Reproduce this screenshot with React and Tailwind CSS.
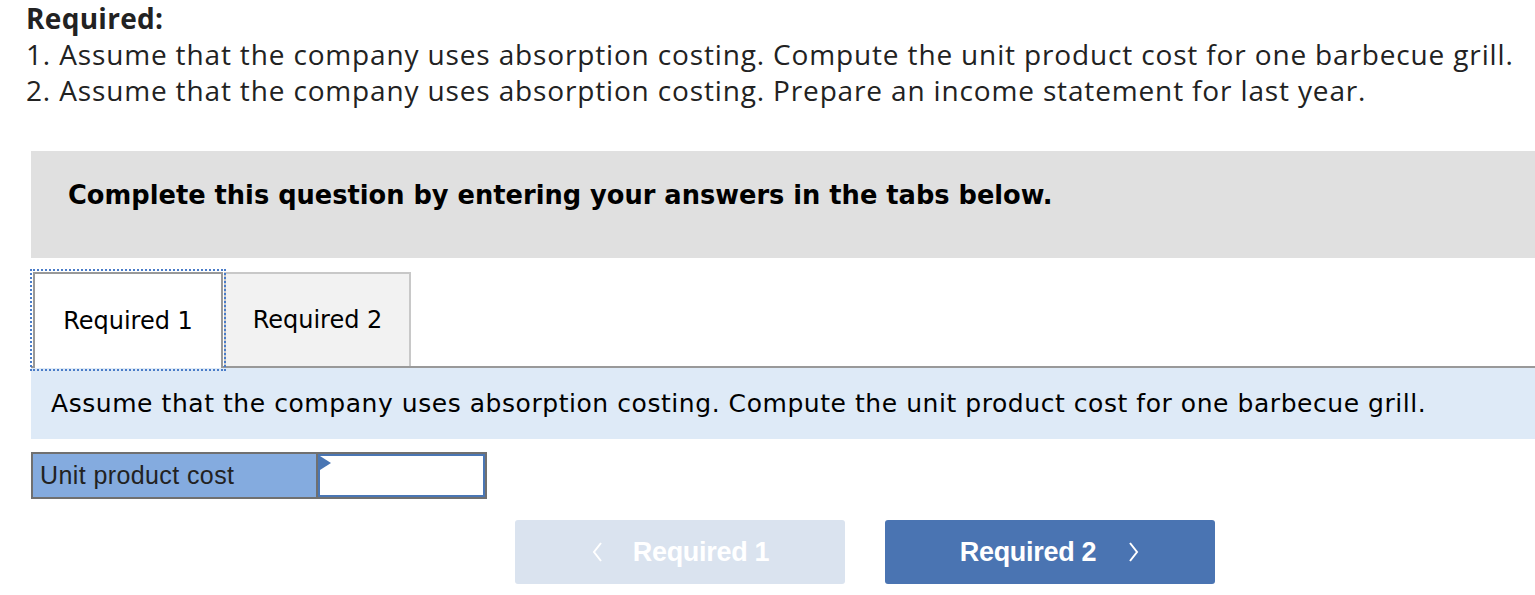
import React from 'react';

const App = () => {
    return (
        <div className="w-[1535px] h-[595px] bg-white overflow-hidden">
            {/* Required text */}
            <div className="pl-[26px] pt-[0px] text-[28px] leading-[36px] tracking-[0.85px] text-[#222222] font-['Open_Sans',sans-serif]">
                <p className="font-bold tracking-[0.3px]">Required:</p>
                <p>1. Assume that the company uses absorption costing. Compute the unit product cost for one barbecue grill.</p>
                <p>2. Assume that the company uses absorption costing. Prepare an income statement for last year.</p>
            </div>

            <div className="ml-[31px] mt-[43px] font-['DejaVu_Sans',sans-serif]">
                {/* Instructions banner */}
                <div className="h-[107px] bg-[#e0e0e0] pl-[37px] pt-[29px]">
                    <span className="text-[25.7px] leading-[30px] font-bold text-black">Complete this question by entering your answers in the tabs below.</span>
                </div>

                {/* Tabs */}
                <div className="mt-[14px] flex items-end border-b-2 border-[#999999] h-[96px]">
                    <button className="relative w-[190px] h-[96px] -mb-[2px] bg-white border-2 border-b-0 border-[#999999] text-[24px] text-black outline-2 outline-dotted outline-[#4a7cc8] outline-offset-[1px] ml-[2px]">
                        Required 1
                    </button>
                    <button className="w-[187px] h-[94px] ml-[1px] bg-[#f2f2f2] border-2 border-b-0 border-[#c8c8c8] text-[24px] text-black">
                        Required 2
                    </button>
                </div>

                {/* Question */}
                <div className="h-[71px] bg-[#deeaf7] flex items-center pl-[20px]">
                    <span className="text-[25px] tracking-[0.55px] text-black">Assume that the company uses absorption costing. Compute the unit product cost for one barbecue grill.</span>
                </div>

                {/* Answer row */}
                <div className="mt-[13px] flex w-[456px] h-[47px] border-2 border-[#707070] font-['Liberation_Sans',sans-serif]">
                    <div className="w-[285px] bg-[#84abdf] border-r-2 border-[#707070] flex items-center pl-[7px] text-[25px] tracking-[0.4px] text-[#222222]">
                        Unit product cost
                    </div>
                    <div className="relative flex-1 bg-white border-2 border-[#4a76b4]">
                        <svg className="absolute left-0 top-0" width="11" height="14" viewBox="0 0 11 14">
                            <polygon points="0,0 11,7 0,14" fill="#4a76b4" />
                        </svg>
                    </div>
                </div>

                {/* Navigation */}
                <div className="mt-[21px] flex gap-[40px] pl-[484px] font-['Liberation_Sans',sans-serif]">
                    <button className="w-[330px] h-[64px] rounded-[3px] bg-[#dae3ef] text-white text-[27px] font-bold tracking-[-0.3px] flex items-center justify-center">
                        <svg className="mr-[30px]" width="12" height="22" viewBox="0 0 12 22">
                            <polyline points="10,2 3,11 10,20" fill="none" stroke="white" strokeWidth="2" />
                        </svg>
                        Required 1
                    </button>
                    <button className="w-[330px] h-[64px] rounded-[3px] bg-[#4a74b2] text-white text-[27px] font-bold tracking-[-0.3px] flex items-center justify-center">
                        Required 2
                        <svg className="ml-[32px]" width="12" height="22" viewBox="0 0 12 22">
                            <polyline points="2,2 9,11 2,20" fill="none" stroke="white" strokeWidth="2" />
                        </svg>
                    </button>
                </div>
            </div>
        </div>
    );
};

export default App;
